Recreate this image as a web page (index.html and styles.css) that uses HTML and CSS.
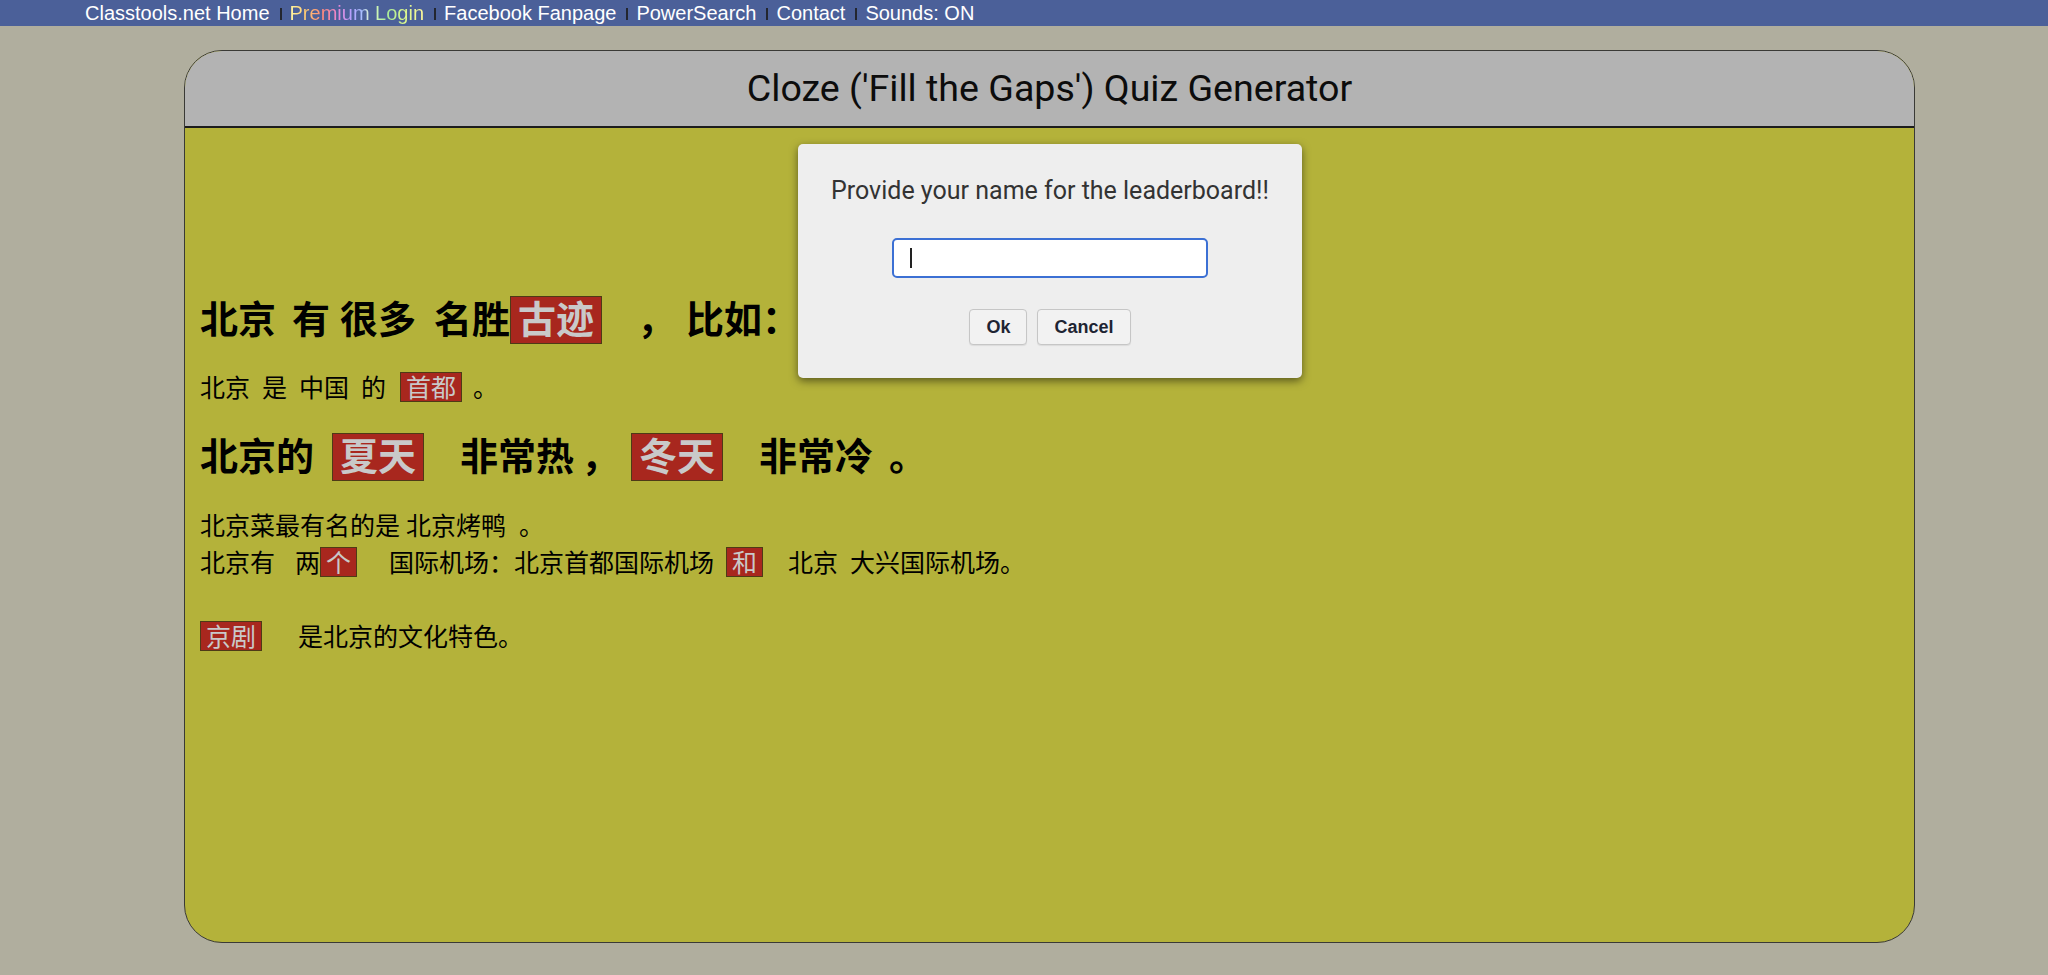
FILE: index.html
```html
<!DOCTYPE html>
<html lang="zh">
<head>
    <meta charset="UTF-8">
    <meta name="viewport" content="width=device-width, initial-scale=1.0">
    <title>Cloze ('Fill the Gaps') Quiz Generator</title>
    <link rel="stylesheet" href="styles.css">
</head>
<body>
    <!-- top links bar -->
    <div class="topbar">
        <a href="#">Classtools.net Home</a><span class="sep"></span><a href="#" class="rainbow">Premium Login</a><span class="sep"></span><a href="#">Facebook Fanpage</a><span class="sep"></span><a href="#">PowerSearch</a><span class="sep"></span><a href="#">Contact</a><span class="sep"></span><a href="#">Sounds: ON</a>
    </div>

    <div class="panel">
        <div class="panel-head">
            <h1>Cloze ('Fill the Gaps') Quiz Generator</h1>
        </div>

        <div class="quiz">
            <div class="row big r1"><span>北京</span><span class="g16">有</span><span class="g10">很多</span><span class="g18">名胜</span><span class="gap">古迹</span><span class="g35">，</span><span class="g11">比如：</span></div>
            <div class="row small r2"><span>北京</span><span class="g12">是</span><span class="g12">中国</span><span class="g12">的</span><span class="gap g14">首都</span><span class="g11">。</span></div>
            <div class="row big r3"><span>北京的</span><span class="gap g18">夏天</span><span class="g36">非常热</span><span class="g7">，</span><span class="gap g12">冬天</span><span class="g36">非常冷</span><span class="g16">。</span></div>
            <div class="para small">
                <div class="pline"><span>北京菜最有名的是</span><span class="g6">北京烤鸭</span><span class="g13">。</span></div>
                <div class="pline"><span>北京有</span><span class="g20">两</span><span class="gap">个</span><span class="g32">国际机场：北京首都国际机场</span><span class="gap g12">和</span><span class="g25">北京</span><span class="g12">大兴国际机场。</span></div>
                <div class="pline"></div>
                <div class="pline"><span class="gap">京剧</span><span class="g36">是北京的文化特色。</span></div>
            </div>
        </div>
    </div>

    <!-- name prompt -->
    <div class="prompt">
        <p>Provide your name for the leaderboard!!</p>
        <div class="field"><span class="caret"></span></div>
        <div class="buttons">
            <button>Ok</button>
            <button>Cancel</button>
        </div>
    </div>
</body>
</html>
```

FILE: styles.css
```css
body {
    margin: 0;
    background: #b0ae9e;
    font-family: "Liberation Sans", Arial, sans-serif;
}

.topbar {
    height: 26px;
    background: #4b6099;
    padding-left: 85px;
    font-size: 20px;
    line-height: 26px;
    white-space: nowrap;
}

.topbar a {
    color: white;
    text-decoration: none;
}

.topbar .sep {
    display: inline-block;
    width: 2px;
    height: 12px;
    background: #23262f;
    margin: 0 8px 0 10px;
}

.rainbow {
    background: linear-gradient(90deg, #fff6a0 0%, #ffc870 12%, #ff8a7a 24%, #ec86d6 36%, #b2a0ff 46%, #a8c0ff 54%, #e6fbc8 60%, #a6ec9a 72%, #d4f58c 84%, #fff89a 100%);
    -webkit-background-clip: text;
    background-clip: text;
    color: transparent !important;
}

.panel {
    box-sizing: border-box;
    width: 1731px;
    height: 893px;
    margin: 24px 0 0 184px;
    border: 1px solid #3a3a36;
    border-radius: 38px;
    background: #b4b23a;
    overflow: hidden;
}

.panel-head {
    height: 75px;
    background: #b3b3b3;
    border-bottom: 2px solid #1c1c1c;
}

.panel-head h1 {
    margin: 0;
    font-family: Roboto, "Liberation Sans", sans-serif;
    font-weight: normal;
    font-size: 37.6px;
    line-height: 75px;
    text-align: center;
    color: #0c0c0c;
}

.quiz {
    padding: 153px 15px 0;
    font-family: "Noto Sans CJK SC", sans-serif;
    color: #000;
}

.row {
    white-space: nowrap;
}

.big {
    font-size: 38px;
    font-weight: bold;
}

.small {
    font-size: 25px;
}

.r1 { height: 71px; line-height: 71px; }
.r2 { height: 68px; line-height: 68px; }
.r3 { height: 68px; line-height: 68px; }

.para {
    margin-top: 18px;
    line-height: 37px;
}

.pline {
    height: 37px;
    white-space: nowrap;
}

/* the red answer boxes */
.gap {
    display: inline-block;
    background: #a8271e;
    color: #c9c9c9;
    border: 1px solid #4e3a16;
}

.big .gap {
    line-height: 40px;
    padding: 0 7px 6px;
}

.small .gap {
    line-height: 26px;
    padding: 0 5px 2px;
}

.g6 { margin-left: 6px; }
.g7 { margin-left: 7px; }
.g10 { margin-left: 10px; }
.g11 { margin-left: 11px; }
.g12 { margin-left: 12px; }
.g13 { margin-left: 13px; }
.g14 { margin-left: 14px; }
.g16 { margin-left: 16px; }
.g18 { margin-left: 18px; }
.g20 { margin-left: 20px; }
.g25 { margin-left: 25px; }
.g32 { margin-left: 32px; }
.g35 { margin-left: 35px; }
.g36 { margin-left: 36px; }

/* prompt dialog sits over the quiz */
.prompt {
    position: absolute;
    left: 798px;
    top: 144px;
    box-sizing: border-box;
    width: 504px;
    height: 234px;
    padding-top: 33px;
    background: #eeeeee;
    border-radius: 5px;
    box-shadow: 0 3px 9px rgba(0, 0, 0, 0.5);
    display: flex;
    flex-direction: column;
    align-items: center;
}

.prompt p {
    margin: 0;
    font-family: Roboto, sans-serif;
    font-size: 25px;
    line-height: 28px;
    color: #333;
}

.field {
    box-sizing: border-box;
    width: 316px;
    height: 40px;
    margin-top: 33px;
    padding: 8px 0 0 16px;
    background: white;
    border: 2px solid #3c70d4;
    border-radius: 5px;
}

.caret {
    display: block;
    width: 2px;
    height: 20px;
    background: #222;
}

.buttons {
    display: flex;
    gap: 10px;
    margin-top: 31px;
}

.buttons button {
    font-family: "Liberation Sans", Arial, sans-serif;
    font-weight: bold;
    font-size: 18px;
    line-height: 20px;
    padding: 7px 16px;
    color: #1e2433;
    background: #f2f2f2;
    border: 1px solid #c6c6c6;
    border-radius: 4px;
    box-shadow: 0 1px 1px rgba(0, 0, 0, 0.08);
}
```
